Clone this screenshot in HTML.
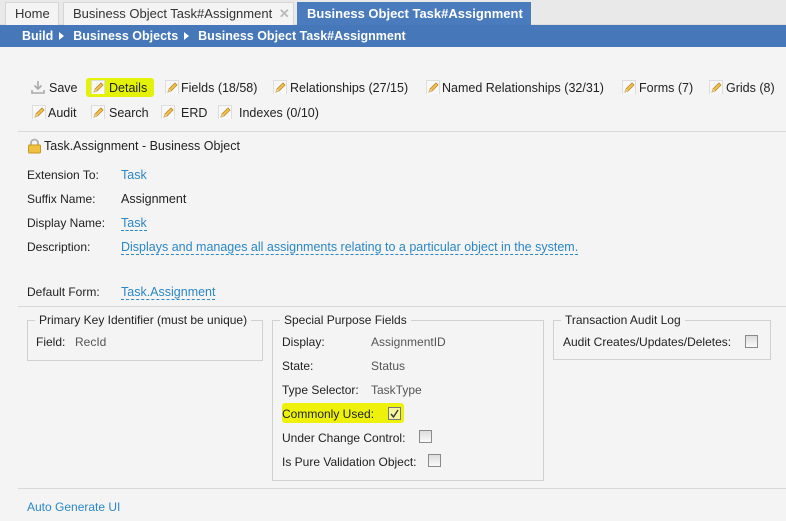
<!DOCTYPE html>
<html><head><meta charset="utf-8"><style>
*{margin:0;padding:0;box-sizing:border-box}
body{width:786px;height:521px;background:#f4f4f4;font-family:"Liberation Sans",Arial,sans-serif;font-size:12px;color:#222;position:relative;overflow:hidden}
.a{position:absolute;white-space:nowrap}
.tabbar{position:absolute;left:0;top:0;width:786px;height:25px;background:#e9e9e9;border-bottom:1px solid #ddd}
.tab{position:absolute;top:2px;height:23px;background:#f4f4f4;border:1px solid #d6d6d6;border-bottom:none;line-height:22px;padding-left:9px;font-size:13px;color:#333}
.tab.act{background:#4a7bbd;color:#fff;font-weight:bold;border-color:#4a7bbd}
.bc{position:absolute;left:0;top:25px;width:786px;height:22px;background:#4577b9;color:#fff;font-weight:bold;font-size:12.5px;line-height:22px}
.tri{display:inline-block;width:0;height:0;border-left:5px solid #fff;border-top:4px solid transparent;border-bottom:4px solid transparent;margin:0 9px 0 6px;vertical-align:0}
.lnk{color:#2b87c6}
.big{font-size:12.5px}
.dash{border-bottom:1px dashed #2b87c6}
.hr{position:absolute;left:18px;right:0;height:1px;background:#d8d8d8}
.fs{position:absolute;border:1px solid #d0d0d0}
.leg{position:absolute;top:-8px;left:7px;background:#f4f4f4;padding:0 4px;font-size:12px;color:#222}
.cb{position:absolute;width:13px;height:13px;border:1px solid #8a8a8a;background:linear-gradient(#ddd,#fafafa)}
.pen{position:absolute;width:14px;height:14px}
.g{color:#555}
</style></head><body>
<div class="tabbar"></div>
<div class="tab" style="left:5px;width:54px">Home</div>
<div class="tab" style="left:63px;width:231px">Business Object Task#Assignment <span style="color:#bbb;font-weight:bold;margin-left:3px">✕</span></div>
<div class="tab act" style="left:297px;width:234px">Business Object Task#Assignment <span style="margin-left:3px">✕</span></div>
<div class="bc"><span style="margin-left:22px">Build</span><span class="tri"></span>Business Objects<span class="tri"></span>Business Object Task#Assignment</div>

<svg class="a" style="left:31px;top:80px" width="14" height="14" viewBox="0 0 14 14"><path d="M7 1v8M3.5 5.5L7 9l3.5-3.5M1 10v3h12v-3" fill="none" stroke="#aaa" stroke-width="1.6"/></svg>
<div class="a" style="left:49px;top:81px;font-size:12.5px">Save</div>
<div class="a" style="left:86px;top:78px;width:68px;height:19px;background:#e4f20a;border-radius:3px"></div>

<div class="a" style="left:109px;top:81px;font-size:12.5px">Details</div>
<div class="a" style="left:181px;top:81px;font-size:12.5px">Fields (18/58)</div>
<div class="a" style="left:290px;top:81px;font-size:12.5px">Relationships (27/15)</div>
<div class="a" style="left:442px;top:81px;font-size:12.5px">Named Relationships (32/31)</div>
<div class="a" style="left:639px;top:81px;font-size:12.5px">Forms (7)</div>
<div class="a" style="left:726px;top:81px;font-size:12.5px">Grids (8)</div>
<div class="a" style="left:48px;top:106px;font-size:12.5px">Audit</div>
<div class="a" style="left:109px;top:106px;font-size:12.5px">Search</div>
<div class="a" style="left:181px;top:106px;font-size:12.5px">ERD</div>
<div class="a" style="left:239px;top:106px;font-size:12.5px">Indexes (0/10)</div>

<svg width="0" height="0" style="position:absolute"><defs><g id="p"><rect x="0.5" y="0.5" width="13" height="14" fill="#f8f8f8" stroke="#ddd"/><path d="M3 12l1-3 6-6 2 2-6 6z" fill="#f2c14e" stroke="#b88a2a" stroke-width="0.8"/><path d="M3 12l1-3 2 2z" fill="#e8d2a0"/></g></defs></svg>
<svg class="pen" style="left:91px;top:80px" width="14" height="15"><use href="#p"/></svg>
<svg class="pen" style="left:165px;top:80px" width="14" height="15"><use href="#p"/></svg>
<svg class="pen" style="left:273px;top:80px" width="14" height="15"><use href="#p"/></svg>
<svg class="pen" style="left:426px;top:80px" width="14" height="15"><use href="#p"/></svg>
<svg class="pen" style="left:622px;top:80px" width="14" height="15"><use href="#p"/></svg>
<svg class="pen" style="left:709px;top:80px" width="14" height="15"><use href="#p"/></svg>
<svg class="pen" style="left:32px;top:105px" width="14" height="15"><use href="#p"/></svg>
<svg class="pen" style="left:91px;top:105px" width="14" height="15"><use href="#p"/></svg>
<svg class="pen" style="left:161px;top:105px" width="14" height="15"><use href="#p"/></svg>
<svg class="pen" style="left:218px;top:105px" width="14" height="15"><use href="#p"/></svg>

<div class="hr" style="top:131px"></div>
<svg class="a" style="left:27px;top:138px" width="15" height="16" viewBox="0 0 15 16"><path d="M4 7V5a3.5 3.5 0 0 1 7 0v2" fill="none" stroke="#b0b0b0" stroke-width="1.8"/><rect x="1.5" y="7" width="12" height="8" rx="1" fill="#f0c040" stroke="#c99a20"/></svg>
<div class="a" style="left:44px;top:139px;font-size:12.5px">Task.Assignment - Business Object</div>

<div class="a" style="left:27px;top:168px">Extension To:</div><div class="a lnk big" style="left:121px;top:168px">Task</div>
<div class="a" style="left:27px;top:192px">Suffix Name:</div><div class="a big" style="left:121px;top:192px">Assignment</div>
<div class="a" style="left:27px;top:216px">Display Name:</div><div class="a lnk dash big" style="left:121px;top:216px">Task</div>
<div class="a" style="left:27px;top:240px">Description:</div><div class="a lnk dash big" style="left:121px;top:240px">Displays and manages all assignments relating to a particular object in the system.</div>
<div class="a" style="left:27px;top:285px">Default Form:</div><div class="a lnk dash big" style="left:121px;top:285px">Task.Assignment</div>

<div class="hr" style="top:306px"></div>

<div class="fs" style="left:27px;top:320px;width:236px;height:41px"><div class="leg">Primary Key Identifier (must be unique)</div>
<div class="a" style="left:8px;top:14px">Field:</div><div class="a g" style="left:47px;top:14px">RecId</div></div>

<div class="fs" style="left:272px;top:320px;width:272px;height:161px"><div class="leg">Special Purpose Fields</div>
<div class="a" style="left:9px;top:14px">Display:</div><div class="a g" style="left:98px;top:14px">AssignmentID</div>
<div class="a" style="left:9px;top:38px">State:</div><div class="a g" style="left:98px;top:38px">Status</div>
<div class="a" style="left:9px;top:62px">Type Selector:</div><div class="a g" style="left:98px;top:62px">TaskType</div>
<div class="a" style="left:9px;top:82px;width:122px;height:20px;background:#eef20a;border-radius:3px"></div>
<div class="a" style="left:9px;top:86px">Commonly Used:</div>
<div class="cb" style="left:115px;top:86px;border-color:#777;background:#f5f5a0"><svg width="11" height="11" style="position:absolute;left:0;top:0"><path d="M2 6l2.5 3L9 2" fill="none" stroke="#333" stroke-width="1.4"/></svg></div>
<div class="a" style="left:9px;top:110px">Under Change Control:</div><div class="cb" style="left:146px;top:109px"></div>
<div class="a" style="left:9px;top:134px">Is Pure Validation Object:</div><div class="cb" style="left:155px;top:133px"></div>
</div>

<div class="fs" style="left:553px;top:320px;width:218px;height:40px"><div class="leg">Transaction Audit Log</div>
<div class="a" style="left:9px;top:14px">Audit Creates/Updates/Deletes:</div><div class="cb" style="left:191px;top:14px"></div></div>

<div class="hr" style="top:488px"></div>
<div class="a lnk" style="left:27px;top:500px">Auto Generate UI</div>
</body></html>
